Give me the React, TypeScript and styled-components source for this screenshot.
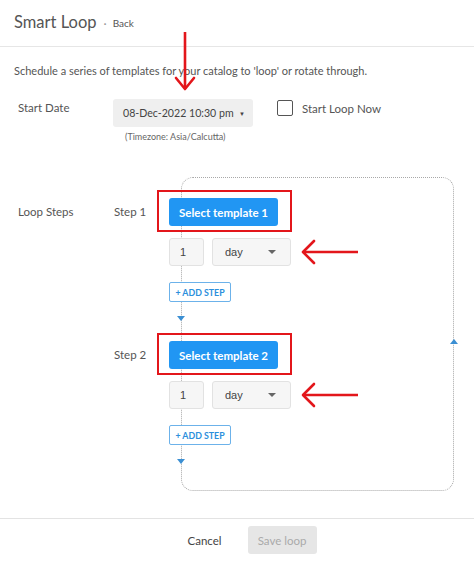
import React from "react";
import styled, { createGlobalStyle } from "styled-components";

const Global = createGlobalStyle`
  * { box-sizing: border-box; }
  html, body { margin: 0; padding: 0; background: #fff; }
  body { font-family: Lato, "Noto Sans", sans-serif; color: #555; }
`;

const Page = styled.div`
  position: relative;
  width: 474px;
  height: 561px;
  display: flex;
  flex-direction: column;
  overflow: hidden;
`;

const Header = styled.div`
  height: 47px;
  padding: 0 14px 2px;
  display: flex;
  align-items: center;
  border-bottom: 1px solid #e6e6e6;
`;

const Title = styled.span`
  font-size: 16.5px;
  color: #555;
`;

const Dot = styled.span`
  color: #999;
  font-size: 12px;
  margin: 2px 6px 0 7px;
`;

const Back = styled.span`
  font-size: 10px;
  color: #555;
  margin-top: 2px;
`;

const Description = styled.p`
  margin: 16px 0 0 14px;
  font-size: 11px;
  line-height: 16px;
  color: #555;
`;

const DateRow = styled.div`
  display: flex;
  margin: 20px 0 0 18px;
`;

const FieldLabel = styled.div<{ $top?: number }>`
  width: 95px;
  flex: none;
  font-size: 11.5px;
  line-height: 16px;
  margin-top: ${(p) => p.$top ?? 0}px;
  color: #555;
`;

const DateColumn = styled.div`
  display: flex;
  flex-direction: column;
`;

const DateBox = styled.div`
  width: 140px;
  height: 28px;
  border-radius: 3px;
  background: #efefef;
  display: flex;
  align-items: center;
  padding: 0 8px 0 10px;
  font-size: 10.6px;
  color: #444;
  white-space: nowrap;
  justify-content: space-between;
`;

const SmallCaret = styled.span`
  font-size: 6px;
  color: #444;
`;

const Timezone = styled.div`
  margin: 4px 0 0 12px;
  font-size: 9px;
  line-height: 12px;
  color: #666;
`;

const CheckWrap = styled.label`
  display: flex;
  align-items: center;
  gap: 9px;
  margin: 1px 0 0 24px;
  height: 16px;
  font-size: 11.5px;
  color: #555;
`;

const CheckBox = styled.span`
  width: 16px;
  height: 16px;
  border: 1.5px solid #555;
  border-radius: 2px;
  background: #fff;
`;

const LoopSection = styled.div`
  display: flex;
  margin: 34px 0 0 18px;
`;

const Frame = styled.div`
  position: relative;
  margin-left: 68px;
  width: 273px;
  height: 314px;
  border: 1px dotted #a8a8a8;
  border-radius: 12px;
  padding: 20px 0 0 0;
`;

const UpTriangle = styled.span`
  position: absolute;
  right: -5px;
  top: 161px;
  width: 0;
  height: 0;
  border-left: 4.5px solid transparent;
  border-right: 4.5px solid transparent;
  border-bottom: 5px solid #3b8fd3;
`;

const StepRow = styled.div`
  display: grid;
  grid-template-columns: 55px 1fr;
  margin-left: -68px;
`;

const StepLabel = styled.div`
  font-size: 11.5px;
  line-height: 28px;
  height: 28px;
  color: #555;
`;

const StepBody = styled.div`
  display: flex;
  flex-direction: column;
  align-items: flex-start;
`;

const Highlight = styled.div`
  position: relative;
  &::after {
    content: "";
    position: absolute;
    top: -8px;
    bottom: -6px;
    left: -12px;
    right: -14px;
    border: 2px solid #e3161b;
    pointer-events: none;
  }
`;

const TemplateButton = styled.button`
  width: 109px;
  height: 28px;
  border: none;
  border-radius: 3px;
  background: #2196f3;
  color: #fff;
  font-family: Lato, "Noto Sans", sans-serif;
  font-weight: 700;
  font-size: 11.5px;
  padding: 0;
`;

const InputsRow = styled.div`
  position: relative;
  display: flex;
  gap: 8px;
  margin-top: 12px;
`;

const Field = styled.div<{ $w: number; $pl: number }>`
  width: ${(p) => p.$w}px;
  height: 28px;
  background: #f6f6f6;
  border: 1px solid #e2e2e2;
  border-radius: 3px;
  display: flex;
  align-items: center;
  justify-content: space-between;
  padding: 0 14px 0 ${(p) => p.$pl}px;
  font-family: "Liberation Sans", Arial, sans-serif;
  font-size: 11px;
  color: #444;
`;

const SelectCaret = styled.span`
  width: 0;
  height: 0;
  border-left: 4px solid transparent;
  border-right: 4px solid transparent;
  border-top: 4px solid #666;
`;

const AddStep = styled.button`
  margin-top: 16px;
  width: 62px;
  height: 20px;
  padding: 0;
  background: #fff;
  border: 1px solid #6cb2ea;
  border-radius: 2px;
  color: #2b8fdc;
  font-family: Lato, "Noto Sans", sans-serif;
  font-weight: 700;
  font-size: 8.8px;
  white-space: nowrap;
`;

const Connector = styled.div`
  height: 39px;
  padding: 14px 0 0 8px;
`;

const DownTriangle = styled.span`
  display: block;
  width: 0;
  height: 0;
  border-left: 4.5px solid transparent;
  border-right: 4.5px solid transparent;
  border-top: 5px solid #3b8fd3;
`;

const ArrowSide = styled.svg`
  position: absolute;
  left: 131px;
  top: 0;
`;

const ArrowDown = styled.svg`
  position: absolute;
  left: 173px;
  top: 31px;
`;

const Footer = styled.div`
  margin-top: 27px;
  height: 43px;
  border-top: 1px solid #e3e3e3;
  display: flex;
  align-items: center;
  justify-content: center;
  padding: 0 0 0 30px;
  gap: 26px;
`;

const CancelText = styled.span`
  font-size: 11.5px;
  color: #444;
`;

const SaveButton = styled.button`
  width: 69px;
  height: 28px;
  border: none;
  border-radius: 3px;
  background: #e6e6e6;
  color: #aaa;
  font-family: Lato, "Noto Sans", sans-serif;
  font-size: 11.5px;
  padding: 0;
`;

const steps = [1, 2];

function SideArrow() {
  return (
    <ArrowSide width="60" height="28" viewBox="0 0 60 28">
      <path d="M3 14 H58" stroke="#e3161b" strokeWidth="2.6" fill="none" />
      <path d="M14 3 L3 14 L14 25" stroke="#e3161b" strokeWidth="2.6" fill="none" strokeLinecap="round" strokeLinejoin="round" />
    </ArrowSide>
  );
}

export default function App() {
  return (
    <Page>
      <Global />
      <Header>
        <Title>Smart Loop</Title>
        <Dot>·</Dot>
        <Back>Back</Back>
      </Header>
      <Description>
        Schedule a series of templates for your catalog to 'loop' or rotate through.
      </Description>
      <DateRow>
        <FieldLabel $top={1}>Start Date</FieldLabel>
        <DateColumn>
          <DateBox>
            <span>08-Dec-2022 10:30 pm</span>
            <SmallCaret>▼</SmallCaret>
          </DateBox>
          <Timezone>(Timezone: Asia/Calcutta)</Timezone>
        </DateColumn>
        <CheckWrap>
          <CheckBox />
          Start Loop Now
        </CheckWrap>
      </DateRow>
      <LoopSection>
        <FieldLabel $top={27}>Loop Steps</FieldLabel>
        <Frame>
          <UpTriangle />
          {steps.map((n) => (
            <StepRow key={n}>
              <StepLabel>Step {n}</StepLabel>
              <StepBody>
                <Highlight>
                  <TemplateButton>Select template {n}</TemplateButton>
                </Highlight>
                <InputsRow>
                  <Field $w={35} $pl={10}>1</Field>
                  <Field $w={79} $pl={12}>
                    <span>day</span>
                    <SelectCaret />
                  </Field>
                  <SideArrow />
                </InputsRow>
                <AddStep>+ ADD STEP</AddStep>
                <Connector>
                  <DownTriangle />
                </Connector>
              </StepBody>
            </StepRow>
          ))}
        </Frame>
      </LoopSection>
      <Footer>
        <CancelText>Cancel</CancelText>
        <SaveButton>Save loop</SaveButton>
      </Footer>
      <ArrowDown width="24" height="60" viewBox="0 0 24 60">
        <path d="M12 1 V58" stroke="#e3161b" strokeWidth="2.6" fill="none" />
        <path d="M3 47 L12 58 L21 47" stroke="#e3161b" strokeWidth="2.6" fill="none" strokeLinecap="round" strokeLinejoin="round" />
      </ArrowDown>
    </Page>
  );
}
